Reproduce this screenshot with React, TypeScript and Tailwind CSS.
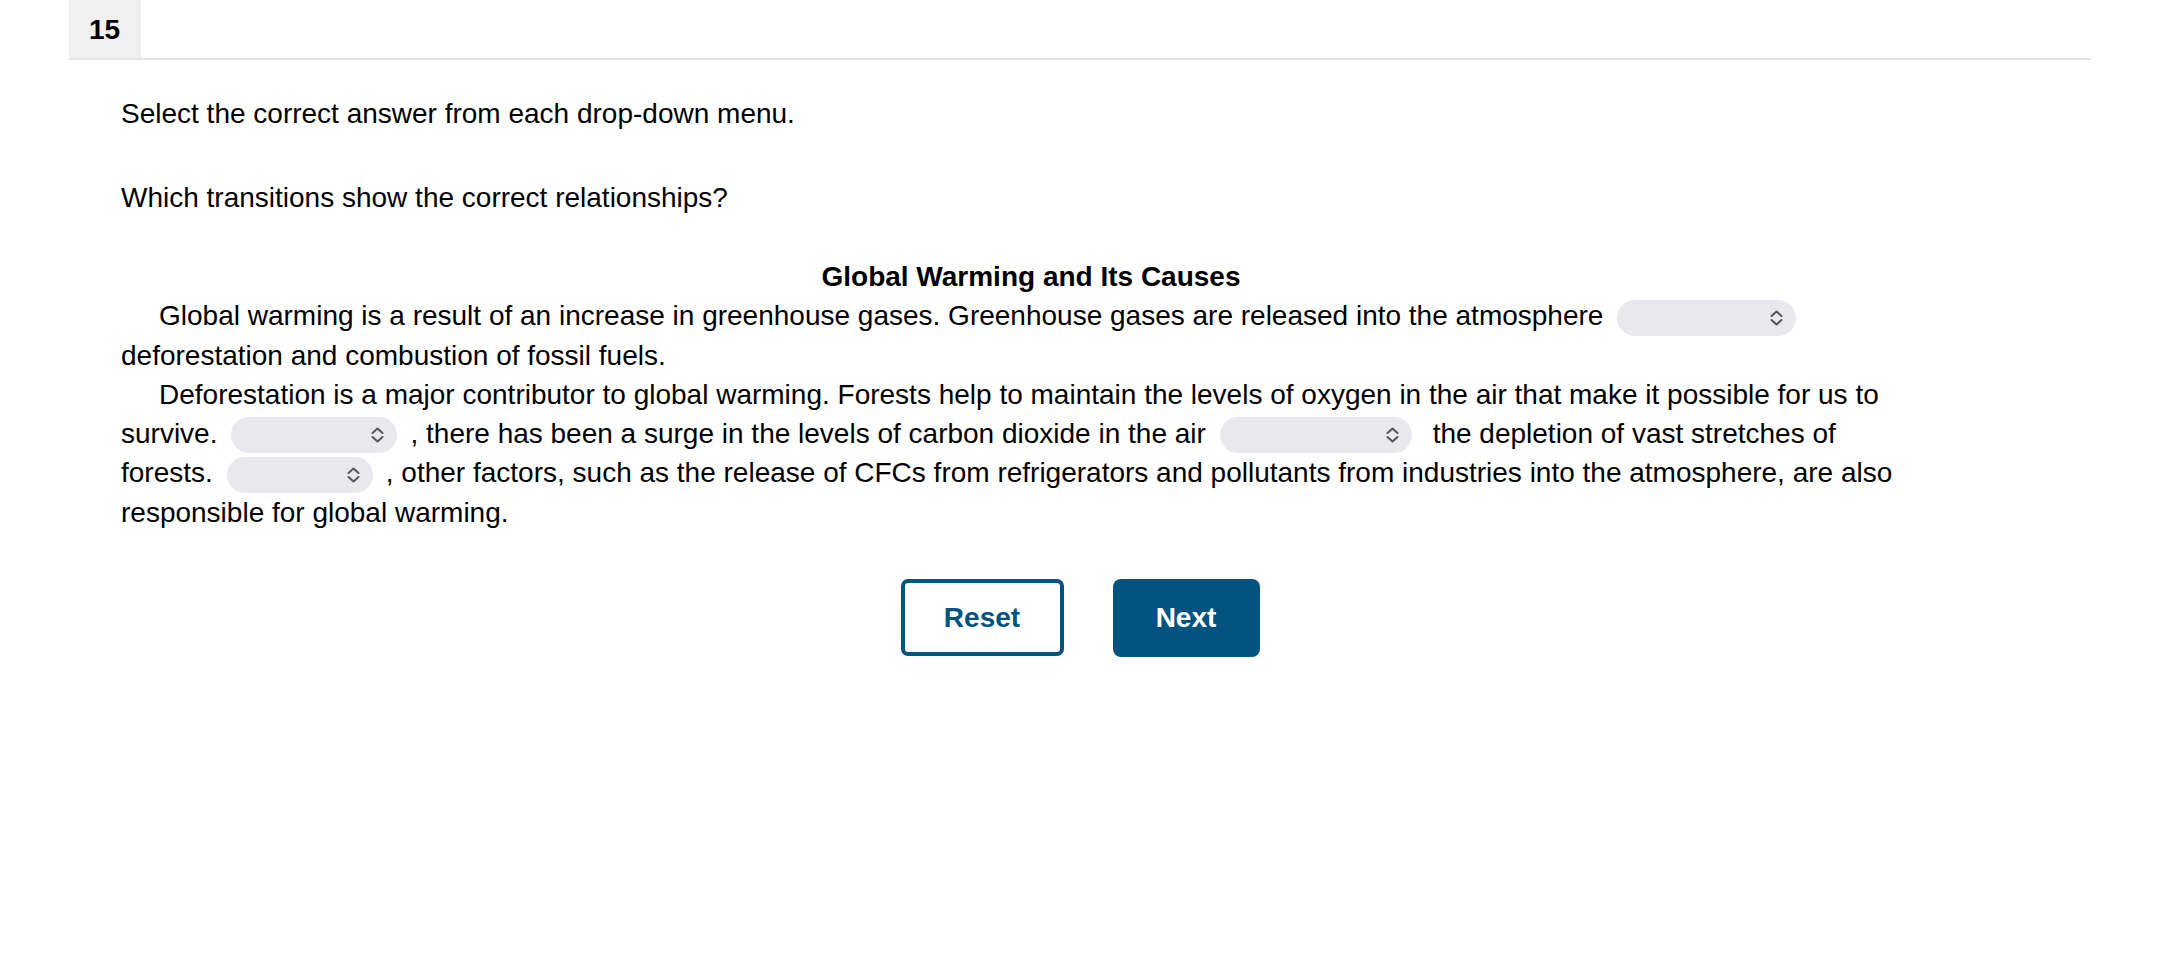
import { useState } from "react";

const BLUE = "#02537f";

function Chevrons() {
  return (
    <svg
      width="13"
      height="16"
      viewBox="0 0 13 16"
      fill="none"
      stroke="#555555"
      strokeWidth="2"
      strokeLinecap="round"
      strokeLinejoin="round"
      className="pointer-events-none absolute right-[13px] top-1/2 -translate-y-1/2"
    >
      <path d="M1.5 6 L6.5 1.5 L11.5 6" />
      <path d="M1.5 10 L6.5 14.5 L11.5 10" />
    </svg>
  );
}

function Drop({ width, options }: { width: string; options: string[] }) {
  const [value, setValue] = useState("");
  return (
    <span className={`relative ml-[14px] mr-[13px] inline-block h-[36px] indent-0 align-middle ${width}`}>
      <select
        value={value}
        onChange={(e) => setValue(e.target.value)}
        className="block h-full w-full cursor-pointer appearance-none rounded-full bg-[#e9e9ed] pl-4 pr-9 text-[20px] text-black outline-none"
      >
        <option value=""></option>
        {options.map((o) => (
          <option key={o} value={o}>
            {o}
          </option>
        ))}
      </select>
      <Chevrons />
    </span>
  );
}

export default function App() {
  return (
    <div className="min-h-screen bg-white font-['Liberation_Sans',Arial,sans-serif] text-[28px] leading-[39px] text-black">
      <div className="mx-[69px]">
        <div className="flex border-b-2 border-[#e4e4e4]">
          <div className="flex h-[58px] w-[72px] items-center bg-[#f0f0f0] pl-[20px] font-bold">15</div>
        </div>

        <div className="pl-[52px] pt-[34px]">
          <p>Select the correct answer from each drop-down menu.</p>
          <p className="mt-[45px]">Which transitions show the correct relationships?</p>

          <div className="mt-[40px] w-[1820px]">
            <h2 className="text-center font-bold">Global Warming and Its Causes</h2>
            <div className="pr-[24px]">
              <p className="indent-[38px]">
                Global warming is a result of an increase in greenhouse gases. Greenhouse gases are released into the
                atmosphere
                <Drop width="w-[179px]" options={["because of", "in spite of", "instead of"]} />
                deforestation and combustion of fossil fuels.
              </p>
              <p className="indent-[38px]">
                Deforestation is a major contributor to global warming. Forests help to maintain the levels of oxygen in
                the air that make it possible for us to survive.
                <Drop width="w-[166px]" options={["However", "Therefore", "Similarly"]} />, there has been a surge in the
                levels of carbon dioxide in the air
                <Drop width="w-[192px]" options={["because of", "despite", "such as"]} /> the depletion of vast stretches
                of forests.
                <Drop width="w-[146px]" options={["Besides", "Instead", "Finally"]} />, other factors, such as the release
                of CFCs from refrigerators and pollutants from industries into the atmosphere, are also responsible for
                global warming.
              </p>
            </div>
          </div>
        </div>
      </div>

      <div className="mt-[47px] flex justify-center gap-[49px]">
        <button
          type="button"
          className="h-[77px] w-[163px] rounded-[7px] border-4 border-[#02537f] bg-white font-bold"
          style={{ color: BLUE }}
        >
          Reset
        </button>
        <button type="button" className="h-[78px] w-[147px] rounded-[8px] bg-[#02537f] font-bold text-white">
          Next
        </button>
      </div>
    </div>
  );
}
